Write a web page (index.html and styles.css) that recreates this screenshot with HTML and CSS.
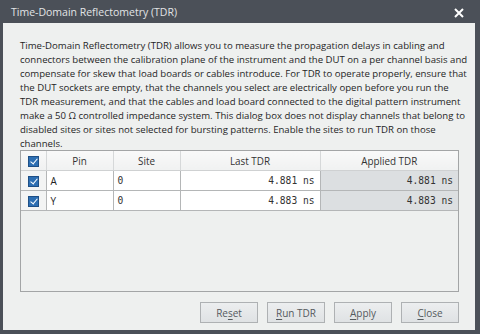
FILE: index.html
```html
<!DOCTYPE html>
<html>
<head>
<meta charset="utf-8">
<link rel="stylesheet" href="styles.css">
</head>
<body>
<div class="window">
  <div class="titlebar">
    <span class="title">Time-Domain Reflectometry (TDR)</span>
    <svg class="close-x" width="10" height="10" viewBox="0 0 10 10"><path d="M1 1L9 9M9 1L1 9" stroke="#ffffff" stroke-width="2"/></svg>
  </div>
  <div class="content">
    <p class="desc">Time-Domain Reflectometry (TDR) allows you to measure the propagation delays in cabling and<br>connectors between the calibration plane of the instrument and the DUT on a per channel basis and<br>compensate for skew that load boards or cables introduce. For TDR to operate properly, ensure that<br>the DUT sockets are empty, that the channels you select are electrically open before you run the<br>TDR measurement, and that the cables and load board connected to the digital pattern instrument<br>make a 50 Ω controlled impedance system. This dialog box does not display channels that belong to<br>disabled sites or sites not selected for bursting patterns. Enable the sites to run TDR on those<br>channels.</p>
    <div class="grid">
      <table>
        <colgroup><col class="c0"><col class="c1"><col class="c2"><col class="c3"><col class="c4"></colgroup>
        <thead>
          <tr><th><span class="cb"></span></th><th>Pin</th><th>Site</th><th>Last TDR</th><th>Applied TDR</th></tr>
        </thead>
        <tbody>
          <tr><td class="cbc"><span class="cb"></span></td><td>A</td><td class="mono">0</td><td class="mono num">4.881 ns</td><td class="mono num applied">4.881 ns</td></tr>
          <tr><td class="cbc"><span class="cb"></span></td><td>Y</td><td class="mono">0</td><td class="mono num">4.883 ns</td><td class="mono num applied">4.883 ns</td></tr>
        </tbody>
      </table>
    </div>
    <div class="buttons">
      <button>Re<u>s</u>et</button>
      <button><u>R</u>un TDR</button>
      <button><u>A</u>pply</button>
      <button><u>C</u>lose</button>
    </div>
  </div>
</div>
</body>
</html>
```
FILE: styles.css
```css
html, body {
  margin: 0;
  padding: 0;
  background: #4b5058;
  width: 480px;
  height: 334px;
  overflow: hidden;
  font-family: "Open Sans", "Noto Sans", sans-serif;
}
.window {
  width: 480px;
  height: 334px;
  display: flex;
  flex-direction: column;
}
.titlebar {
  height: 23px;
  flex: none;
  display: flex;
  align-items: center;
  justify-content: space-between;
  padding: 0 16px 0 11px;
  color: #e2e4e6;
  font-size: 10.5px;
}
.title { margin-top: 1px; }
.close-x { margin-top: 2px; }
.content {
  margin: 0 5px 4px 3px;
  flex: 1;
  background: #eef0ef;
  padding: 16px 16px 0 17px;
  display: flex;
  flex-direction: column;
}
.desc {
  margin: 0;
  height: 111px;
  font-size: 9.6px;
  line-height: 14px;
  color: #1f1f1f;
  width: 452px;
  white-space: nowrap;
}
.grid {
  margin-top: 0px;
  width: 437px;
  height: 140px;
  border: 1px solid #a3a5a6;
  background: #eef0ef;
}
table {
  border-collapse: collapse;
  table-layout: fixed;
  width: 437px;
  font-size: 9.9px;
  color: #222;
}
.c0 { width: 25px; }
.c1 { width: 67px; }
.c2 { width: 67px; }
.c3 { width: 140px; }
.c4 { width: 138px; }
th {
  height: 19px;
  padding: 0;
  font-weight: normal;
  background: linear-gradient(#f9f9f9, #f0f1f1);
  border-right: 1px solid #d6d8d9;
  border-bottom: 1px solid #cfd1d2;
  color: #333;
  text-align: center;
}
th:last-child { border-right: none; }
td {
  height: 19px;
  padding: 0 0 0 4px;
  background: #ffffff;
  border-right: 1px solid #b4b6b7;
  border-bottom: 1px solid #b4b6b7;
  white-space: nowrap;
  overflow: hidden;
}
td:last-child { border-right: none; }
td.cbc { padding: 0; text-align: center; background: #f3f4f4; }
.mono {
  font-family: "DejaVu Sans Mono", "Liberation Mono", monospace;
  font-size: 9.6px;
  color: #333;
}
.num { text-align: right; padding: 0 5px 0 0; }
.applied { background: #dcdfe1; }
.cb {
  display: inline-block;
  width: 11px;
  height: 11px;
  background: #2d6fb3;
  border: 1px solid #1e4f86;
  box-sizing: border-box;
  vertical-align: middle;
  position: relative;
}
.cb::after {
  content: "";
  position: absolute;
  left: 3px;
  top: 0px;
  width: 3px;
  height: 6px;
  border-right: 1.6px solid #fff;
  border-bottom: 1.6px solid #fff;
  transform: rotate(40deg);
}
.buttons {
  display: flex;
  justify-content: flex-end;
  gap: 9px;
  margin-top: 10px;
  width: 439px;
}
button {
  width: 58px;
  height: 21px;
  padding: 0;
  font-family: "Open Sans", "Noto Sans", sans-serif;
  font-size: 10px;
  color: #555a5e;
  background: linear-gradient(#eceeef, #dfe2e4);
  border: 1px solid #aeb1b3;
  border-radius: 0;
}
button u { text-decoration-thickness: 1px; text-underline-offset: 2px; }
```
